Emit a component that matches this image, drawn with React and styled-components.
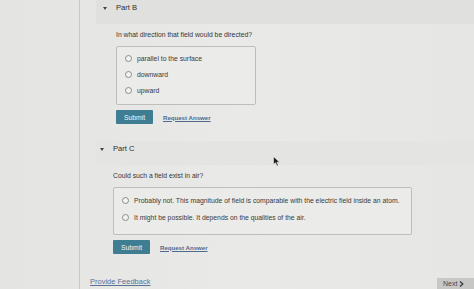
import styled, { createGlobalStyle } from "styled-components"

const GlobalStyle = createGlobalStyle`
    html, body {
        margin: 0;
        padding: 0;
        background: #e7e7e5;
    }
    * {
        box-sizing: border-box;
    }
`

const parts = [
    {
        title: "Part B",
        question: "In what direction that field would be directed?",
        options: ["parallel to the surface", "downward", "upward"],
        boxWidth: 140,
        rowHeight: 16,
        pad: [3, 6],
        shift: 0,
    },
    {
        title: "Part C",
        question: "Could such a field exist in air?",
        options: [
            "Probably not. This magnitude of field is comparable with the electric field inside an atom.",
            "It might be possible. It depends on the qualities of the air.",
        ],
        boxWidth: 299,
        rowHeight: 17,
        pad: [4, 8],
        shift: -3,
    },
]

export default function App() {
    return (
        <>
            <GlobalStyle />
            <Page>
                <Gutter />
                <Main>
                    {parts.map((p, i) => (
                        <Part key={p.title} $first={i === 0}>
                            <PartHeader $shift={p.shift} $first={i === 0}>
                                <Caret />
                                <PartTitle>{p.title}</PartTitle>
                            </PartHeader>
                            <PartBody $shift={p.shift}>
                                <Question>{p.question}</Question>
                                <OptionsBox $width={p.boxWidth} $pad={p.pad}>
                                    {p.options.map((o) => (
                                        <Option key={o} $height={p.rowHeight}>
                                            <Radio />
                                            <span>{o}</span>
                                        </Option>
                                    ))}
                                </OptionsBox>
                                <Actions>
                                    <SubmitButton>Submit</SubmitButton>
                                    <RequestLink>Request Answer</RequestLink>
                                </Actions>
                            </PartBody>
                        </Part>
                    ))}
                    <Footer>
                        <FeedbackLink>Provide Feedback</FeedbackLink>
                        <NextButton>
                            Next
                            <svg width="5" height="6" viewBox="0 0 5 6">
                                <path d="M1 0.5 L3.8 3 L1 5.5" fill="none" stroke="#3b3b3b" strokeWidth="1.3" />
                            </svg>
                        </NextButton>
                    </Footer>
                </Main>
                <Pointer width="8" height="11" viewBox="0 0 8 11">
                    <path d="M0.5 0.5 L0.5 8.5 L2.5 6.7 L4 10 L5.3 9.4 L3.9 6.2 L6.6 6.2 Z" fill="#1c1c1c" stroke="#f2f2f2" strokeWidth="0.6" />
                </Pointer>
            </Page>
        </>
    )
}

const Page = styled.div`
    position: relative;
    display: flex;
    width: 474px;
    height: 289px;
    overflow: hidden;
    background: linear-gradient(90deg, #e4e4e2 0%, #e9e9e7 50%, #e6e6e4 100%);
    font-family: "Liberation Sans", Arial, sans-serif;
    color: #363636;
`
const Gutter = styled.div`
    width: 80px;
    flex-shrink: 0;
    border-right: 1px solid #c9c9c7;
`
const Main = styled.div`
    flex: 1;
    display: flex;
    flex-direction: column;
`
const Part = styled.section`
    margin-top: ${props => props.$first ? "0" : "17px"};
`
const PartHeader = styled.div`
    display: flex;
    align-items: center;
    height: 24px;
    margin-left: 16px;
    padding: 4px 0 12px ${props => 7 + props.$shift}px;
    background: ${props => props.$first ? "#e0e0de" : "#e4e4e2"};
`
const Caret = styled.span`
    width: 0;
    height: 0;
    border-left: 2.5px solid transparent;
    border-right: 2.5px solid transparent;
    border-top: 3px solid #444;
`
const PartTitle = styled.span`
    margin-left: 9px;
    font-size: 7.6px;
    line-height: 8px;
    color: #2e2e2e;
`
const PartBody = styled.div`
    padding-left: ${props => 36 + props.$shift}px;
`
const Question = styled.p`
    margin: 7px 0 7px;
    font-size: 6.8px;
    line-height: 8px;
`
const OptionsBox = styled.div`
    width: ${props => props.$width}px;
    padding: ${props => props.$pad[0]}px 0 ${props => props.$pad[1]}px 8px;
    border: 1px solid #bebebc;
    border-radius: 2px;
    background: #ebebe9;
`
const Option = styled.div`
    display: flex;
    align-items: center;
    gap: 5px;
    height: ${props => props.$height}px;
    font-size: 6.8px;
    color: #3a3a3a;
    white-space: nowrap;
`
const Radio = styled.span`
    width: 7px;
    height: 7px;
    flex-shrink: 0;
    border: 1px solid #8a8a8a;
    border-radius: 50%;
    background: #f3f3f2;
`
const Actions = styled.div`
    display: flex;
    align-items: center;
    gap: 10px;
    margin-top: 5px;
`
const SubmitButton = styled.button`
    width: 37px;
    height: 14px;
    padding: 0;
    border: none;
    border-radius: 1px;
    background: #3f7d93;
    color: #f2f6f8;
    font-family: "Liberation Sans", Arial, sans-serif;
    font-size: 6.8px;
`
const RequestLink = styled.span`
    font-size: 6.1px;
    font-weight: 700;
    color: #4d6a8e;
    text-decoration: underline;
`
const Footer = styled.div`
    display: flex;
    justify-content: space-between;
    align-items: flex-end;
    margin-top: auto;
    padding-left: 10px;
`
const FeedbackLink = styled.span`
    margin-bottom: 3px;
    font-size: 7.5px;
    color: #5b7396;
    text-decoration: underline;
`
const NextButton = styled.span`
    display: flex;
    align-items: center;
    gap: 2px;
    width: 37px;
    height: 11px;
    padding-left: 6px;
    background: #c7c7c5;
    color: #4a4a4a;
    font-size: 7px;
`
const Pointer = styled.svg`
    position: absolute;
    left: 273px;
    top: 156px;
`
